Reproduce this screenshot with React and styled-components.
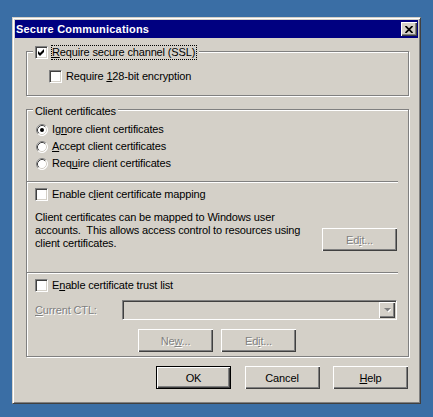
import styled, { createGlobalStyle, css } from "styled-components";

const GlobalStyle = createGlobalStyle`
  body {
    margin: 0;
    background: #3a6ea5;
    font-family: "Liberation Sans", Arial, sans-serif;
    font-size: 11px;
    letter-spacing: -0.15px;
    color: #000;
  }
`;

const Desktop = styled.div`
  padding: 17px 0 0 12px;
  height: 417px;
  box-sizing: border-box;
`;

const Window = styled.div`
  width: 409px;
  height: 387px;
  box-sizing: border-box;
  background: #d4d0c8;
  border: 1px solid;
  border-color: #d4d0c8 #404040 #404040 #d4d0c8;
  box-shadow: inset 1px 1px #fff, inset -1px -1px #808080;
  padding: 2px;
  display: flex;
  flex-direction: column;
`;

const TitleBar = styled.div`
  height: 18px;
  background: #000080;
  color: #fff;
  font-weight: bold;
  letter-spacing: 0.2px;
  display: flex;
  align-items: center;
  justify-content: space-between;
  padding: 0 1px 0 1px;
`;

const raised = css`
  background: #d4d0c8;
  box-shadow: inset 1px 1px #fff, inset -1px -1px #404040, inset -2px -2px #808080;
`;

const CloseButton = styled.div`
  ${raised};
  width: 16px;
  height: 14px;
  display: flex;
  align-items: center;
  justify-content: center;
`;

const Content = styled.div`
  padding: 13px 9px 0 11px;
  display: flex;
  flex-direction: column;
`;

const GroupBox = styled.div`
  border: 1px solid #808080;
  box-shadow: inset 1px 1px #fff, 1px 1px #fff;
  padding: 0 11px ${(p) => p.$pb}px 8px;
  margin-top: ${(p) => p.$mt || 0}px;
  display: flex;
  flex-direction: column;
`;

const Legend = styled.div`
  align-self: flex-start;
  display: flex;
  align-items: center;
  gap: 3px;
  height: 15px;
  margin: -7px 0 0 -2px;
  padding: 0 2px;
  background: #d4d0c8;
`;

const Row = styled.div`
  display: flex;
  align-items: center;
  gap: ${(p) => (p.$gap === undefined ? 3 : p.$gap)}px;
  height: ${(p) => p.$h || 15}px;
  margin-top: ${(p) => p.$mt || 0}px;
  margin-left: ${(p) => p.$ml || 0}px;
`;

const Label = styled.span`
  border: 1px dotted ${(p) => (p.$focus ? "#000" : "transparent")};
  padding-right: 1px;
  line-height: 13px;
  white-space: nowrap;
`;

const Box = styled.span`
  width: 13px;
  height: 13px;
  box-sizing: border-box;
  flex: none;
  display: inline-flex;
  border: 1px solid;
  border-color: #808080 #fff #fff #808080;
  box-shadow: inset 1px 1px #404040, inset -1px -1px #d4d0c8;
  background: #fff;
`;

const RadioIcon = styled.svg`
  flex: none;
  margin-left: 1px;
`;

const Separator = styled.div`
  border-top: 1px solid #808080;
  border-bottom: 1px solid #fff;
  margin: ${(p) => p.$mt}px -1px 0 -8px;
`;

const Section = styled.div`
  display: flex;
  justify-content: space-between;
  align-items: flex-start;
  margin-top: ${(p) => p.$mt}px;
`;

const Paragraph = styled.p`
  margin: 0;
  line-height: 13px;
`;

const Button = styled.button`
  ${raised};
  width: 75px;
  height: 23px;
  box-sizing: border-box;
  padding: 0;
  border: ${(p) => (p.$default ? "1px solid #000" : "none")};
  font-family: inherit;
  font-size: 11px;
  letter-spacing: inherit;
  color: #000;
  margin-top: ${(p) => p.$mt || 0}px;
  &:disabled {
    color: #808080;
    text-shadow: 1px 1px #fff;
  }
`;

const Disabled = styled.span`
  color: #808080;
  text-shadow: 1px 1px #fff;
  width: ${(p) => p.$w}px;
  flex: none;
`;

const Combo = styled.div`
  width: 275px;
  height: 20px;
  box-sizing: border-box;
  border: 1px solid;
  border-color: #808080 #fff #fff #808080;
  box-shadow: inset 1px 1px #404040, inset -1px -1px #d4d0c8;
  background: #d4d0c8;
  padding: 1px;
  display: flex;
  justify-content: flex-end;
`;

const DropButton = styled.div`
  ${raised};
  width: 16px;
  height: 16px;
  display: flex;
  align-items: center;
  justify-content: center;
`;

const ButtonRow = styled.div`
  display: flex;
  justify-content: flex-end;
  gap: ${(p) => p.$gap || 13}px;
  margin: ${(p) => p.$mt}px ${(p) => p.$mr || 0}px 0 ${(p) => p.$ml || 0}px;
  align-self: ${(p) => (p.$start ? "flex-start" : "stretch")};
`;

const Checkbox = ({ checked }) => (
  <Box>
    {checked && (
      <svg width="11" height="11" viewBox="0 0 11 11">
        <polygon points="2,4 4,6 8,2 8,5 4,9 2,7" fill="#000" />
      </svg>
    )}
  </Box>
);

const Radio = ({ checked }) => (
  <RadioIcon width="12" height="12" viewBox="0 0 12 12">
    <circle cx="6" cy="6" r="5.5" fill="#fff" />
    <path d="M2.11 9.89 A5.5 5.5 0 0 1 9.89 2.11" fill="none" stroke="#808080" />
    <path d="M9.89 2.11 A5.5 5.5 0 0 1 2.11 9.89" fill="none" stroke="#fff" />
    <path d="M2.82 9.18 A4.5 4.5 0 0 1 9.18 2.82" fill="none" stroke="#404040" />
    <path d="M9.18 2.82 A4.5 4.5 0 0 1 2.82 9.18" fill="none" stroke="#d4d0c8" />
    {checked && <circle cx="6" cy="6" r="2" fill="#000" />}
  </RadioIcon>
);

export default function App() {
  return (
    <>
      <GlobalStyle />
      <Desktop>
        <Window>
          <TitleBar>
            <span>Secure Communications</span>
            <CloseButton>
              <svg width="8" height="7" viewBox="0 0 8 7">
                <path d="M0.5 0 L7.5 7 M7.5 0 L0.5 7" stroke="#000" strokeWidth="1.7" />
              </svg>
            </CloseButton>
          </TitleBar>
          <Content>
            <GroupBox $pb={11}>
              <Legend>
                <Checkbox checked />
                <Label $focus>
                  <u>R</u>equire secure channel (SSL)
                </Label>
              </Legend>
              <Row $mt={9} $ml={14}>
                <Checkbox />
                <Label>
                  Require <u>1</u>28-bit encryption
                </Label>
              </Row>
            </GroupBox>

            <GroupBox $mt={13} $pb={4}>
              <Legend>
                <span>Client certificates</span>
              </Legend>
              <Row $h={17} $mt={3}>
                <Radio checked />
                <Label>
                  Ig<u>n</u>ore client certificates
                </Label>
              </Row>
              <Row $h={17}>
                <Radio />
                <Label>
                  <u>A</u>ccept client certificates
                </Label>
              </Row>
              <Row $h={17}>
                <Radio />
                <Label>
                  Req<u>u</u>ire client certificates
                </Label>
              </Row>

              <Separator $mt={9} />
              <Row $mt={4}>
                <Checkbox />
                <Label>
                  Enable c<u>l</u>ient certificate mapping
                </Label>
              </Row>
              <Section $mt={9}>
                <Paragraph>
                  Client certificates can be mapped to Windows user
                  <br />
                  accounts.&nbsp; This allows access control to resources using
                  <br />
                  client certificates.
                </Paragraph>
                <Button $mt={17} disabled>
                  Ed<u>i</u>t...
                </Button>
              </Section>

              <Separator $mt={21} />
              <Row $mt={4}>
                <Checkbox />
                <Label>
                  E<u>n</u>able certificate trust list
                </Label>
              </Row>
              <Row $h={20} $mt={7} $gap={0}>
                <Disabled $w={87}>
                  <u>C</u>urrent CTL:
                </Disabled>
                <Combo>
                  <DropButton>
                    <svg width="7" height="5" viewBox="0 0 7 5">
                      <polygon points="1,1 8,1 4.5,4.5" fill="#fff" />
                      <polygon points="0,0 7,0 3.5,3.5" fill="#808080" />
                    </svg>
                  </DropButton>
                </Combo>
              </Row>
              <ButtonRow $mt={9} $ml={103} $gap={8} $start>
                <Button disabled>
                  Ne<u>w</u>...
                </Button>
                <Button disabled>
                  Ed<u>i</u>t...
                </Button>
              </ButtonRow>
            </GroupBox>

            <ButtonRow $mt={9} $mr={1} $gap={13.5}>
              <Button $default>OK</Button>
              <Button>Cancel</Button>
              <Button>
                <u>H</u>elp
              </Button>
            </ButtonRow>
          </Content>
        </Window>
      </Desktop>
    </>
  );
}
